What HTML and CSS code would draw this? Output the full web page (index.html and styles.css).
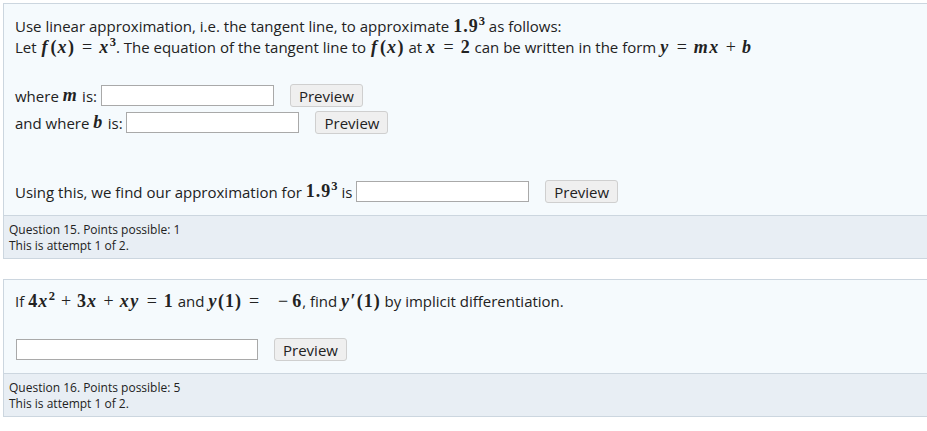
FILE: index.html
```html
<!DOCTYPE html>
<html>
<head>
<meta charset="utf-8">
<link rel="stylesheet" href="styles.css">
</head>
<body>
<div class="question q15">
  <div class="qbody">
    <p class="text">Use linear approximation, i.e. the tangent line, to approximate <span class="m"><span class="n">1.9</span><sup>3</sup></span> as follows:<br>
    Let <span class="m"><i class="f">f</i>(<i>x</i>)<span class="op">=</span><i>x</i><sup>3</sup></span>. The equation of the tangent line to <span class="m"><i class="f">f</i>(<i>x</i>)</span> at <span class="m"><i>x</i><span class="op">=</span><span class="n">2</span></span> can be written in the form <span class="m"><i>y</i><span class="op">=</span><i>m</i><i>x</i><span class="bin">+</span><i>b</i></span></p>
    <div class="row r1">where <span class="m"><i>m</i></span> is: <input class="ans" type="text"><button class="prev">Preview</button></div>
    <div class="row r2">and where <span class="m"><i>b</i></span> is: <input class="ans" type="text"><button class="prev">Preview</button></div>
    <div class="row r3">Using this, we find our approximation for <span class="m"><span class="n">1.9</span><sup>3</sup></span> is <input class="ans" type="text"><button class="prev">Preview</button></div>
  </div>
  <div class="qfoot">Question 15. Points possible: 1<br>This is attempt 1 of 2.</div>
</div>
<div class="question q16">
  <div class="qbody">
    <p class="text">If <span class="m"><span class="n">4</span><i>x</i><sup>2</sup><span class="bin">+</span><span class="n">3</span><i>x</i><span class="bin">+</span><i>x</i><i>y</i><span class="op">=</span><span class="n">1</span></span> and <span class="m"><i>y</i>(<span class="n">1</span>)<span class="op">=</span><span class="neg">−</span><span class="n">6</span></span>, find <span class="m"><i>y</i>′(<span class="n">1</span>)</span> by implicit differentiation.</p>
    <div class="row r4"><input class="ans wide" type="text"><button class="prev">Preview</button></div>
  </div>
  <div class="qfoot">Question 16. Points possible: 5<br>This is attempt 1 of 2.</div>
</div>
</body>
</html>
```

FILE: styles.css
```css
html, body {
  margin: 0;
  padding: 0;
  background: #ffffff;
  overflow: hidden;
}
body {
  padding-top: 3px;
  padding-left: 3px;
  font-family: "Open Sans", "Liberation Sans", sans-serif;
  font-size: 15px;
  color: #222222;
}
.question {
  width: 940px;
  border: 1px solid #ccd6df;
  background: #f5fafd;
}
.q16 {
  margin-top: 20px;
}
.qbody {
  padding: 12px 11px 12px 11px;
}
.q16 .qbody {
  padding-top: 11px;
  padding-bottom: 12px;
}
.text {
  margin: 0;
  line-height: 21px;
}
.m {
  font-family: "Liberation Serif", "DejaVu Serif", serif;
  font-size: 18px;
  font-weight: bold;
  letter-spacing: 1px;
  white-space: nowrap;
}
.m i {
  font-style: italic;
  padding-right: 0.5px;
}
.m i.f {
  padding-left: 1px;
  padding-right: 2px;
}
.m sup {
  font-size: 12.5px;
  line-height: 0;
  letter-spacing: 0;
  vertical-align: 7px;
}
.op {
  font-weight: normal;
  letter-spacing: 0;
  padding: 0 7px;
}
.bin {
  font-weight: normal;
  letter-spacing: 0;
  padding: 0 6px;
}
.neg {
  font-weight: normal;
  letter-spacing: 0;
  padding: 0 4px 0 12px;
}
.row {
  display: flex;
  align-items: center;
  height: 23px;
  white-space: pre;
}
.r1 { margin-top: 26px; }
.r2 { margin-top: 4px; }
.r3 { margin-top: 46px; }
.r4 { margin-top: 26px; padding-left: 1px; }
.ans {
  box-sizing: border-box;
  width: 173px;
  height: 21px;
  margin: 0;
  padding: 0 3px;
  border: 1px solid #a9a9a9;
  background: #ffffff;
}
.ans.wide {
  width: 242px;
}
.prev {
  box-sizing: border-box;
  margin: 0 0 0 16px;
  width: 73px;
  height: 23px;
  padding: 0;
  font-family: "Open Sans", "Liberation Sans", sans-serif;
  font-size: 15px;
  color: #222222;
  background: #efefef;
  border: 1px solid #cfcfcf;
  border-radius: 3px;
}
.qfoot {
  border-top: 1px solid #ccd6df;
  background: #e8eef4;
  padding: 6px 5px 5px 5px;
  font-size: 12px;
  line-height: 15.5px;
  color: #222222;
}
```
